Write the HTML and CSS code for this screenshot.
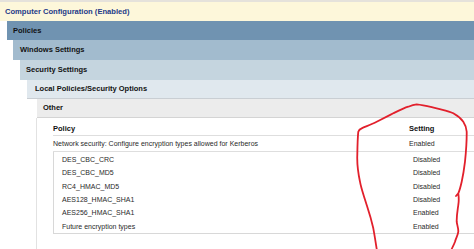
FILE: index.html
```html
<!DOCTYPE html>
<html>
<head>
<meta charset="utf-8">
<link rel="stylesheet" href="styles.css">
</head>
<body>
<div class="page">
  <div class="topline"></div>
  <div class="gpo-title">Computer Configuration (Enabled)</div>
  <div class="lvl l1">
    <div class="bar b1">Policies</div>
    <div class="lvl l2">
      <div class="bar b2">Windows Settings</div>
      <div class="lvl l3">
        <div class="bar b3">Security Settings</div>
        <div class="lvl l4">
          <div class="bar b4">Local Policies/Security Options</div>
          <div class="lvl l5">
            <div class="bar b5">Other</div>
            <div class="content">
              <div class="table">
                <div class="row head">
                  <div class="cell">Policy</div>
                  <div class="cell">Setting</div>
                </div>
                <div class="row main">
                  <div class="cell">Network security: Configure encryption types allowed for Kerberos</div>
                  <div class="cell">Enabled</div>
                </div>
                <div class="box">
                  <div class="item"><span class="name">DES_CBC_CRC</span><span class="val">Disabled</span></div>
                  <div class="item"><span class="name">DES_CBC_MD5</span><span class="val">Disabled</span></div>
                  <div class="item"><span class="name">RC4_HMAC_MD5</span><span class="val">Disabled</span></div>
                  <div class="item"><span class="name">AES128_HMAC_SHA1</span><span class="val">Disabled</span></div>
                  <div class="item"><span class="name">AES256_HMAC_SHA1</span><span class="val">Enabled</span></div>
                  <div class="item"><span class="name">Future encryption types</span><span class="val">Enabled</span></div>
                </div>
              </div>
            </div>
          </div>
        </div>
      </div>
    </div>
  </div>
  <svg class="scribble" width="474" height="249" viewBox="0 0 474 249">
    <path d="M376.7 249 C375 238 374 232 373.3 228.3 C371 218 369 212 366.7 205 C363 193 361 188 360 181.7 C357.5 170 357 162 357.3 155 C357.5 143 357.8 136 358.3 131.7 C359 129.5 360 129 361.7 128.3 C367 126 372 124 376.7 121.7 C383 118.5 388 116 393.3 113.3 C399 110.5 404 108 408.3 106.7 C411 105.5 414 104.5 416.7 104.3 C424 105 430 106.8 436.7 108.3 C443 110 449 111 453.3 113.3 C458 116 461 118.5 463.3 121.7 C465.5 125 466.5 128.5 466.7 131.7 C466.8 142 466 152 465 161.7 C464 170 463 176 461.7 181.7 C460.5 187 459.5 190.5 458.3 193.3 L456 196 M458.3 193.3 C458.8 197 459 201 458.3 205 C457.5 211 456.5 216 456.7 221.7 C457 225 458.5 228 458.3 231.7 C458 235 456 238 455 241.7 C454 244.5 452.5 247 451.7 249" fill="none" stroke="#e2202c" stroke-width="1.8" stroke-linecap="round" stroke-linejoin="round"/>
  </svg>
</div>
</body>
</html>
```
FILE: styles.css
```css
html, body {
  margin: 0;
  padding: 0;
  background: #ffffff;
}
.page {
  position: relative;
  width: 474px;
  height: 249px;
  overflow: hidden;
  font-family: "Liberation Sans", Arial, sans-serif;
  font-size: 7px;
  color: #222;
}
.topline {
  height: 2px;
  background: #e5e2db;
}
.gpo-title {
  height: 19px;
  line-height: 19px;
  padding-left: 5px;
  background: #fdf7da;
  color: #243a88;
  font-weight: bold;
  font-size: 7.6px;
}
.l1 { margin-left: 7px; }
.l2 { margin-left: 6px; }
.l3 { margin-left: 7px; }
.l4 { margin-left: 7px; }
.l5 { margin-left: 9px; }
.bar {
  font-weight: bold;
  font-size: 7.5px;
  color: #111;
  height: 20px;
  line-height: 20px;
  box-sizing: border-box;
}
.b1 { background: #7093b1; padding-left: 6px; height: 19px; line-height: 19px; }
.b2 { background: #a2bbce; padding-left: 7px; }
.b3 { background: #c5d5df; padding-left: 6px; }
.b4 { background: #e0e8ee; padding-left: 8px; height: 19px; line-height: 18px; border-bottom: 1px solid #c9ced3; }
.b5 { background: #ececec; padding-left: 6px; margin-left: 1px; height: 19px; line-height: 18px; border-bottom: 1px solid #d4d4d4; }
.content {
  border-left: 1px solid #e2e2e2;
  padding: 3px 0 20px 16px;
}
.row {
  display: grid;
  grid-template-columns: 356px 1fr;
  border-bottom: 1px solid #dedede;
}
.row.head {
  height: 14px;
  line-height: 16px;
  font-weight: bold;
  font-size: 7.5px;
  color: #111;
}
.row.main {
  height: 15px;
  line-height: 15px;
  color: #2a2a2a;
}
.box {
  border-left: 1px solid #d8d8d8;
  border-bottom: 1px solid #d8d8d8;
  padding-top: 1px;
  height: 80px;
}
.item {
  display: grid;
  grid-template-columns: 359px 1fr;
  line-height: 13.33px;
  color: #2a2a2a;
}
.item .name { padding-left: 8px; }
.scribble {
  position: absolute;
  left: 0;
  top: 0;
  pointer-events: none;
}
```
